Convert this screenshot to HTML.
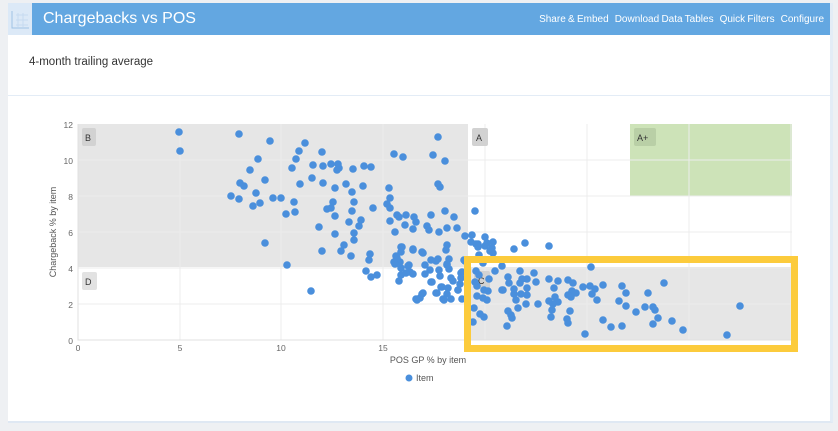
<!DOCTYPE html>
<html><head><meta charset="utf-8"><style>
html,body{margin:0;padding:0;width:838px;height:431px;overflow:hidden;background:#eef0f3;font-family:"Liberation Sans",sans-serif}
#card{position:absolute;left:8px;top:3px;width:822px;height:418px;background:#fff;border-bottom:2px solid #dfe8f3;border-right:3px solid #e3ecf6}
#ico{position:absolute;left:8px;top:3px;width:24px;height:32px;background:#dce9f7}
#hdr{position:absolute;left:32px;top:3px;width:798px;height:32px;background:#63a7e1;color:#fff}
#hdr .t{position:absolute;left:11px;top:7px;font-size:16px}
#hdr .n{position:absolute;right:6px;top:11px;font-size:10px;word-spacing:-0.5px}
#hdr .n span{margin-left:6px}
#sub{position:absolute;left:29px;top:56px;font-size:11.5px;color:#333}
#div{position:absolute;left:8px;top:95px;width:822px;height:1px;background:#e3ecf6}
svg{position:absolute;left:0;top:0}
</style></head><body>
<div id="card"></div>
<div id="ico"><svg width="24" height="32" viewBox="0 0 24 32"><g stroke="#9fc2e6" stroke-width="1" fill="none"><path d="M4 8v17h17"/><path d="M8 12h12M8 17h12M8 22h12M10 10v14M15 10v14" stroke="#c6dbf0"/></g></svg></div>
<div id="hdr"><div class="t">Chargebacks vs POS</div><div class="n"><span>Share &amp; Embed</span><span>Download Data Tables</span><span>Quick Filters</span><span>Configure</span></div></div>
<div id="sub">4-month trailing average</div>
<div id="div"></div>
<svg width="838" height="431" font-family="Liberation Sans, sans-serif">
<rect x="78" y="124" width="390" height="143" fill="#e6e6e6"/>
<rect x="630" y="124" width="162" height="72" fill="#cde3b8"/>
<rect x="468" y="267" width="324" height="73" fill="#e6e6e6"/>
<g stroke="#ececec" stroke-width="1">
<path d="M180 124V340M281 124V340M383 124V340M485 124V340M587 124V340M689 124V340M791 124V340"/>
<path d="M78 160H792M78 196H792M78 232H792M78 268H792M78 304H792"/>
</g>
<path d="M78 124V340H792" stroke="#e0e0e0" fill="none"/>
<g fill="#d2d2d2"><rect x="82" y="128" width="14" height="18" rx="2"/><rect x="472" y="128" width="16" height="18" rx="2"/><rect x="634" y="128" width="22" height="18" rx="2" fill="#b9cfa6"/><rect x="82" y="272" width="15" height="18" rx="2" fill="#e2e2e2"/><rect x="474" y="271" width="16" height="18" rx="2"/></g>
<g font-size="9" fill="#333"><text x="85" y="141">B</text><text x="476" y="141">A</text><text x="637" y="141">A+</text><text x="85" y="285">D</text><text x="478" y="284">C</text></g>
<g font-size="8.5" fill="#666" text-anchor="end"><text x="73" y="128">12</text><text x="73" y="164">10</text><text x="73" y="200">8</text><text x="73" y="236">6</text><text x="73" y="272">4</text><text x="73" y="308">2</text><text x="73" y="344">0</text></g>
<g font-size="8.5" fill="#666" text-anchor="middle"><text x="78" y="351">0</text><text x="180" y="351">5</text><text x="281" y="351">10</text><text x="383" y="351">15</text></g>
<text x="428" y="363" font-size="9" fill="#555" text-anchor="middle">POS GP % by item</text>
<text transform="translate(56,232) rotate(-90)" font-size="9" fill="#555" text-anchor="middle">Chargeback % by item</text>
<circle cx="409" cy="378" r="3.5" fill="#4a8fdc"/><text x="416" y="381" font-size="9" fill="#555">Item</text>
<g fill="#4a8fdc" id="d">
<circle cx="179" cy="132" r="3.8"/><circle cx="180" cy="151" r="3.8"/><circle cx="239" cy="134" r="3.8"/><circle cx="270" cy="141" r="3.8"/><circle cx="305" cy="143" r="3.8"/><circle cx="299" cy="151" r="3.8"/><circle cx="322" cy="152" r="3.8"/><circle cx="296" cy="159" r="3.8"/><circle cx="258" cy="159" r="3.8"/><circle cx="292" cy="168" r="3.8"/><circle cx="313" cy="165" r="3.8"/><circle cx="323" cy="166" r="3.8"/><circle cx="331" cy="164" r="3.8"/><circle cx="338" cy="164" r="3.8"/><circle cx="339" cy="168" r="3.8"/><circle cx="337" cy="170" r="3.8"/><circle cx="353" cy="169" r="3.8"/><circle cx="364" cy="166" r="3.8"/><circle cx="371" cy="167" r="3.8"/><circle cx="250" cy="170" r="3.8"/><circle cx="312" cy="178" r="3.8"/><circle cx="265" cy="180" r="3.8"/><circle cx="240" cy="183" r="3.8"/><circle cx="244" cy="186" r="3.8"/><circle cx="300" cy="184" r="3.8"/><circle cx="323" cy="183" r="3.8"/><circle cx="346" cy="184" r="3.8"/><circle cx="363" cy="186" r="3.8"/><circle cx="335" cy="188" r="3.8"/><circle cx="231" cy="196" r="3.8"/><circle cx="239" cy="199" r="3.8"/><circle cx="256" cy="193" r="3.8"/><circle cx="273" cy="198" r="3.8"/><circle cx="281" cy="198" r="3.8"/><circle cx="260" cy="203" r="3.8"/><circle cx="253" cy="206" r="3.8"/><circle cx="294" cy="202" r="3.8"/><circle cx="295" cy="212" r="3.8"/><circle cx="286" cy="214" r="3.8"/><circle cx="333" cy="202" r="3.8"/><circle cx="327" cy="209" r="3.8"/><circle cx="331" cy="208" r="3.8"/><circle cx="352" cy="192" r="3.8"/><circle cx="354" cy="202" r="3.8"/><circle cx="373" cy="208" r="3.8"/><circle cx="352" cy="211" r="3.8"/><circle cx="335" cy="216" r="3.8"/><circle cx="349" cy="222" r="3.8"/><circle cx="361" cy="220" r="3.8"/><circle cx="359" cy="226" r="3.8"/><circle cx="319" cy="227" r="3.8"/><circle cx="335" cy="234" r="3.8"/><circle cx="354" cy="233" r="3.8"/><circle cx="354" cy="240" r="3.8"/><circle cx="344" cy="245" r="3.8"/><circle cx="322" cy="251" r="3.8"/><circle cx="341" cy="251" r="3.8"/><circle cx="351" cy="256" r="3.8"/><circle cx="265" cy="243" r="3.8"/><circle cx="287" cy="265" r="3.8"/><circle cx="311" cy="291" r="3.8"/><circle cx="366" cy="271" r="3.8"/><circle cx="371" cy="277" r="3.8"/><circle cx="377" cy="275" r="3.8"/><circle cx="370" cy="254" r="3.8"/><circle cx="369" cy="260" r="3.8"/><circle cx="389" cy="188" r="3.8"/><circle cx="390" cy="198" r="3.8"/><circle cx="387" cy="204" r="3.8"/><circle cx="390" cy="208" r="3.8"/><circle cx="395" cy="232" r="3.8"/><circle cx="390" cy="221" r="3.8"/><circle cx="397" cy="215" r="3.8"/><circle cx="399" cy="217" r="3.8"/><circle cx="406" cy="215" r="3.8"/><circle cx="414" cy="217" r="3.8"/><circle cx="416" cy="222" r="3.8"/><circle cx="405" cy="225" r="3.8"/><circle cx="413" cy="229" r="3.8"/><circle cx="394" cy="154" r="3.8"/><circle cx="403" cy="157" r="3.8"/><circle cx="433" cy="155" r="3.8"/><circle cx="438" cy="137" r="3.8"/><circle cx="445" cy="161" r="3.8"/><circle cx="438" cy="184" r="3.8"/><circle cx="440" cy="187" r="3.8"/><circle cx="431" cy="215" r="3.8"/><circle cx="427" cy="226" r="3.8"/><circle cx="429" cy="230" r="3.8"/><circle cx="439" cy="232" r="3.8"/><circle cx="447" cy="228" r="3.8"/><circle cx="457" cy="228" r="3.8"/><circle cx="454" cy="217" r="3.8"/><circle cx="445" cy="211" r="3.8"/><circle cx="465" cy="236" r="3.8"/><circle cx="475" cy="211" r="3.8"/><circle cx="472" cy="235" r="3.8"/><circle cx="471" cy="242" r="3.8"/><circle cx="478" cy="244" r="3.8"/><circle cx="485" cy="237" r="3.8"/><circle cx="493" cy="242" r="3.8"/><circle cx="447" cy="245" r="3.8"/><circle cx="446" cy="250" r="3.8"/><circle cx="422" cy="252" r="3.8"/><circle cx="413" cy="250" r="3.8"/><circle cx="401" cy="247" r="3.8"/><circle cx="401" cy="252" r="3.8"/><circle cx="394" cy="262" r="3.8"/><circle cx="397" cy="258" r="3.8"/><circle cx="400" cy="262" r="3.8"/><circle cx="408" cy="266" r="3.8"/><circle cx="410" cy="272" r="3.8"/><circle cx="401" cy="268" r="3.8"/><circle cx="401" cy="275" r="3.8"/><circle cx="399" cy="281" r="3.8"/><circle cx="413" cy="274" r="3.8"/><circle cx="423" cy="253" r="3.8"/><circle cx="431" cy="260" r="3.8"/><circle cx="436" cy="261" r="3.8"/><circle cx="439" cy="270" r="3.8"/><circle cx="440" cy="276" r="3.8"/><circle cx="430" cy="270" r="3.8"/><circle cx="425" cy="274" r="3.8"/><circle cx="431" cy="282" r="3.8"/><circle cx="449" cy="259" r="3.8"/><circle cx="447" cy="264" r="3.8"/><circle cx="449" cy="269" r="3.8"/><circle cx="451" cy="278" r="3.8"/><circle cx="453" cy="281" r="3.8"/><circle cx="448" cy="288" r="3.8"/><circle cx="441" cy="287" r="3.8"/><circle cx="447" cy="294" r="3.8"/><circle cx="436" cy="293" r="3.8"/><circle cx="443" cy="299" r="3.8"/><circle cx="451" cy="299" r="3.8"/><circle cx="458" cy="290" r="3.8"/><circle cx="461" cy="278" r="3.8"/><circle cx="462" cy="272" r="3.8"/><circle cx="420" cy="298" r="3.8"/><circle cx="416" cy="299" r="3.8"/><circle cx="422" cy="294" r="3.8"/><circle cx="462" cy="299" r="3.8"/><circle cx="465" cy="261" r="3.8"/>
<circle cx="514" cy="249" r="3.8"/><circle cx="525" cy="243" r="3.8"/><circle cx="549" cy="246" r="3.8"/><circle cx="591" cy="267" r="3.8"/><circle cx="664" cy="283" r="3.8"/><circle cx="740" cy="306" r="3.8"/><circle cx="727" cy="335" r="3.8"/><circle cx="683" cy="330" r="3.8"/><circle cx="672" cy="321" r="3.8"/><circle cx="658" cy="318" r="3.8"/><circle cx="653" cy="324" r="3.8"/><circle cx="653" cy="307" r="3.8"/><circle cx="655" cy="310" r="3.8"/><circle cx="645" cy="307" r="3.8"/><circle cx="636" cy="312" r="3.8"/><circle cx="648" cy="293" r="3.8"/><circle cx="626" cy="293" r="3.8"/><circle cx="622" cy="286" r="3.8"/><circle cx="626" cy="306" r="3.8"/><circle cx="619" cy="301" r="3.8"/><circle cx="622" cy="326" r="3.8"/><circle cx="611" cy="327" r="3.8"/><circle cx="603" cy="320" r="3.8"/><circle cx="603" cy="285" r="3.8"/><circle cx="597" cy="300" r="3.8"/><circle cx="592" cy="294" r="3.8"/><circle cx="595" cy="289" r="3.8"/><circle cx="590" cy="286" r="3.8"/><circle cx="583" cy="287" r="3.8"/><circle cx="585" cy="334" r="3.8"/><circle cx="576" cy="293" r="3.8"/><circle cx="572" cy="291" r="3.8"/><circle cx="571" cy="297" r="3.8"/><circle cx="568" cy="295" r="3.8"/><circle cx="573" cy="283" r="3.8"/><circle cx="568" cy="280" r="3.8"/><circle cx="558" cy="281" r="3.8"/><circle cx="554" cy="288" r="3.8"/><circle cx="570" cy="311" r="3.8"/><circle cx="567" cy="319" r="3.8"/><circle cx="568" cy="323" r="3.8"/><circle cx="551" cy="317" r="3.8"/><circle cx="552" cy="310" r="3.8"/><circle cx="558" cy="302" r="3.8"/><circle cx="555" cy="297" r="3.8"/><circle cx="553" cy="304" r="3.8"/><circle cx="549" cy="301" r="3.8"/><circle cx="549" cy="279" r="3.8"/><circle cx="536" cy="282" r="3.8"/><circle cx="538" cy="304" r="3.8"/><circle cx="534" cy="273" r="3.8"/><circle cx="527" cy="279" r="3.8"/><circle cx="527" cy="288" r="3.8"/><circle cx="527" cy="295" r="3.8"/><circle cx="526" cy="304" r="3.8"/><circle cx="521" cy="294" r="3.8"/><circle cx="520" cy="283" r="3.8"/><circle cx="520" cy="271" r="3.8"/><circle cx="522" cy="279" r="3.8"/><circle cx="516" cy="300" r="3.8"/><circle cx="514" cy="289" r="3.8"/><circle cx="509" cy="283" r="3.8"/><circle cx="508" cy="277" r="3.8"/><circle cx="518" cy="308" r="3.8"/><circle cx="508" cy="311" r="3.8"/><circle cx="511" cy="315" r="3.8"/><circle cx="512" cy="318" r="3.8"/><circle cx="507" cy="326" r="3.8"/><circle cx="514" cy="294" r="3.8"/><circle cx="503" cy="290" r="3.8"/><circle cx="502" cy="290" r="3.8"/><circle cx="502" cy="266" r="3.8"/><circle cx="495" cy="271" r="3.8"/><circle cx="489" cy="279" r="3.8"/><circle cx="488" cy="291" r="3.8"/><circle cx="487" cy="300" r="3.8"/><circle cx="483" cy="298" r="3.8"/><circle cx="477" cy="296" r="3.8"/><circle cx="477" cy="286" r="3.8"/><circle cx="475" cy="282" r="3.8"/><circle cx="479" cy="275" r="3.8"/><circle cx="476" cy="271" r="3.8"/><circle cx="474" cy="308" r="3.8"/><circle cx="473" cy="322" r="3.8"/><circle cx="480" cy="314" r="3.8"/><circle cx="484" cy="317" r="3.8"/><circle cx="479" cy="255" r="3.8"/><circle cx="476" cy="244" r="3.8"/><circle cx="487" cy="243" r="3.8"/><circle cx="492" cy="248" r="3.8"/><circle cx="493" cy="253" r="3.8"/><circle cx="483" cy="263" r="3.8"/><circle cx="484" cy="290" r="3.8"/><circle cx="485" cy="246" r="3.8"/><circle cx="490" cy="251" r="3.8"/><circle cx="478" cy="247" r="3.8"/>
<circle cx="402" cy="247" r="3.8"/><circle cx="413" cy="249" r="3.8"/><circle cx="396" cy="256" r="3.8"/><circle cx="395" cy="264" r="3.8"/><circle cx="409" cy="265" r="3.8"/><circle cx="406" cy="273" r="3.8"/><circle cx="425" cy="265" r="3.8"/><circle cx="438" cy="259" r="3.8"/><circle cx="447" cy="265" r="3.8"/><circle cx="461" cy="273" r="3.8"/><circle cx="460" cy="284" r="3.8"/><circle cx="432" cy="282" r="3.8"/><circle cx="442" cy="287" r="3.8"/><circle cx="458" cy="290" r="3.8"/><circle cx="437" cy="293" r="3.8"/><circle cx="423" cy="293" r="3.8"/><circle cx="444" cy="300" r="3.8"/><circle cx="417" cy="300" r="3.8"/><circle cx="464" cy="260" r="3.8"/>
</g>
<rect x="467.5" y="259.5" width="327" height="89" fill="none" stroke="#fccb3c" stroke-width="7"/>
</svg>
</body></html>
